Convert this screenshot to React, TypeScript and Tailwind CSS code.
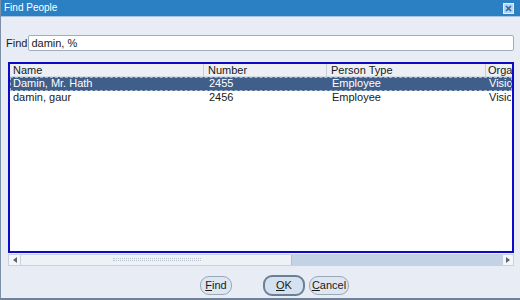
const rows = [
  { name: 'Damin, Mr. Hath', number: '2455', type: 'Employee', org: 'Visic', selected: true },
  { name: 'damin, gaur', number: '2456', type: 'Employee', org: 'Visic', selected: false },
];

const App = () => {
  return (
    <div className="w-[520px] h-[300px] flex flex-col bg-[#e8edf5] text-[11px] text-[#1a1a1a] font-['Liberation_Sans',Arial,sans-serif] border-l border-[#7b8fa8] border-b-2 border-b-[#6f8299] overflow-hidden">
      {/* Title bar */}
      <div className="h-[17px] flex items-center justify-between bg-[#2b80c4] pl-[3px] pr-[6px] border-b border-[#a9c4de]">
        <span className="text-white text-[10px] leading-none">Find People</span>
        <button className="w-[11px] h-[11px] flex items-center justify-center bg-[#b9d3ee] border border-[#e2eefa]">
          <svg width="7" height="7" viewBox="0 0 7 7">
            <path d="M1 1L6 6M6 1L1 6" stroke="#2b6aa8" strokeWidth="1.6" />
          </svg>
        </button>
      </div>

      {/* Find row */}
      <div className="flex items-center pl-[5px] pr-[6px] mt-[18px]">
        <span>Find</span>
        <div className="flex-1 h-[16px] ml-[1px] bg-white border border-[#a3adb9] rounded-[2px] flex items-center px-[2px]">
          damin, %
        </div>
      </div>

      {/* Table */}
      <div className="mx-[7px] mr-[6px] mt-[10px] flex flex-col">
        <div className="h-[191px] border-2 border-[#0a0ac8] bg-white flex flex-col overflow-hidden">
          <div className="grid grid-cols-[194px_123px_159px_1fr] h-[13px] items-center bg-[#ecf0f5] border-b border-[#d4dbe4]">
            <div className="pl-[3px] border-r border-[#c8ced7] h-full leading-[13px]">Name</div>
            <div className="pl-[4px] border-r border-[#c8ced7] h-full leading-[13px]">Number</div>
            <div className="pl-[4px] border-r border-[#c8ced7] h-full leading-[13px]">Person Type</div>
            <div className="pl-[2px] h-full leading-[13px] overflow-hidden whitespace-nowrap">Orga</div>
          </div>
          {rows.map((r) => (
            <div
              key={r.number}
              className={`grid grid-cols-[194px_123px_159px_1fr] h-[14px] items-center ${
                r.selected ? 'bg-[#3f5e8a] text-white border border-dashed border-[#a8b8cc]' : 'border border-transparent'
              }`}
            >
              <div className="pl-[2px] leading-none">{r.name}</div>
              <div className="pl-[4px] leading-none">{r.number}</div>
              <div className="pl-[4px] leading-none">{r.type}</div>
              <div className="pl-[2px] leading-none overflow-hidden whitespace-nowrap">{r.org}</div>
            </div>
          ))}
        </div>

        {/* Horizontal scrollbar */}
        <div className="h-[12px] mt-[1px] flex items-stretch bg-[#eef1f5] border border-[#c9d1db]">
          <div className="w-[12px] flex items-center justify-center border-r border-[#c9d1db] bg-[#f4f6f9]">
            <svg width="4" height="6" viewBox="0 0 4 6">
              <path d="M4 0L0 3L4 6Z" fill="#5a6573" />
            </svg>
          </div>
          <div className="w-[270px] flex items-center">
            <div className="ml-[92px] w-[88px] h-[3px] border-y border-dotted border-[#b8c2ce]" />
          </div>
          <div className="flex-1 bg-[#c3d2e4] border-l border-[#b0bfd1]" />
          <div className="w-[11px] flex items-center justify-center border-l border-[#c9d1db] bg-[#f4f6f9]">
            <svg width="4" height="6" viewBox="0 0 4 6">
              <path d="M0 0L4 3L0 6Z" fill="#5a6573" />
            </svg>
          </div>
        </div>
      </div>

      {/* Buttons */}
      <div className="flex items-center mt-[9px] pl-[199px]">
        <button className="w-[32px] h-[19px] rounded-[9px] border border-[#9aa8b8] bg-[#dde6f1] text-[11px]">
          <span className="underline">F</span>ind
        </button>
        <button className="ml-[31px] w-[42px] h-[21px] rounded-[9px] border-2 border-[#6b7f96] bg-[#d3e1f0] text-[11px]">
          <span className="underline">O</span>K
        </button>
        <button className="ml-[4px] w-[40px] h-[19px] rounded-[9px] border border-[#9aa8b8] bg-[#dde6f1] text-[11px]">
          <span className="underline">C</span>ancel
        </button>
      </div>
    </div>
  );
};

export default App;
